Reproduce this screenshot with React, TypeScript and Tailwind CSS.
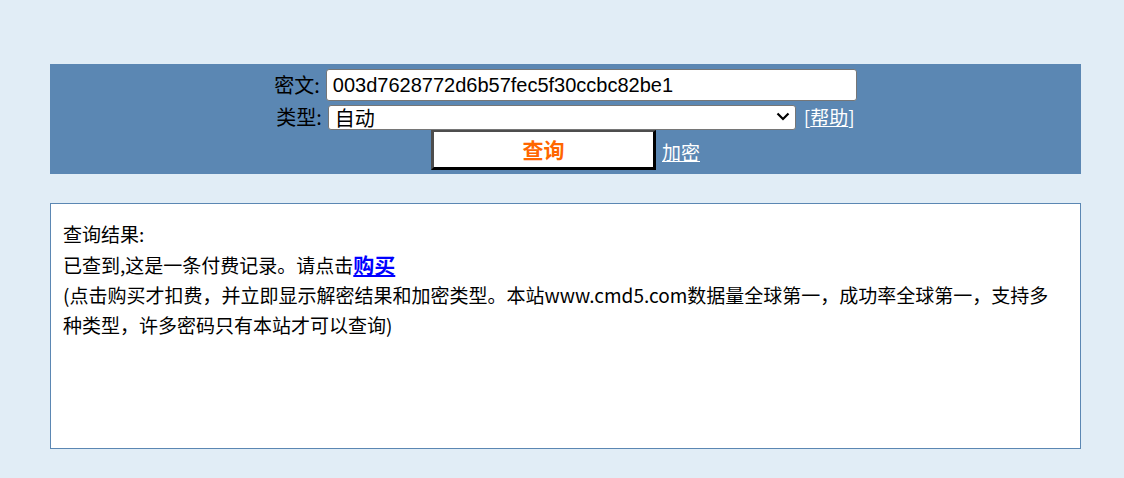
import React from "react";

export default function App() {
  const cjk = { fontFamily: '"Noto Sans CJK SC", "Noto Sans", sans-serif' };
  return (
    <div className="min-h-[478px] w-[1124px] bg-[#e1edf6] pt-[64px]" style={cjk}>
      <div className="mx-[50px] flex h-[110px] w-[1031px] flex-col items-center bg-[#5b87b3] pt-[5px] text-[19px] text-black">
        <div className="flex h-[32px] items-center">
          <span className="mr-[6px] text-[20px] leading-none">密文:</span>
          <input
            readOnly
            value="003d7628772d6b57fec5f30ccbc82be1"
            className="h-[32px] w-[531px] rounded-[3px] border border-[#767676] bg-white px-[6px] text-[20px] text-black outline-none"
            style={{ fontFamily: '"Liberation Sans", Arial, sans-serif' }}
          />
        </div>
        <div className="mt-[3px] flex h-[25px] items-center">
          <span className="mr-[6px] text-[20px] leading-none">类型:</span>
          <div className="relative h-[25px] w-[468px]">
            <select
              defaultValue="auto"
              className="h-[25px] w-[468px] appearance-none rounded-[3px] border border-[#767676] bg-white py-0 pl-[6px] text-[20px] leading-[23px] text-black outline-none"
              style={cjk}
            >
              <option value="auto">自动</option>
            </select>
            <svg
              className="pointer-events-none absolute right-[6px] top-[8px]"
              width="14"
              height="9"
              viewBox="0 0 14 9"
            >
              <path d="M1.5 1.5 L7 7 L12.5 1.5" fill="none" stroke="black" strokeWidth="2.2" />
            </svg>
          </div>
          <span className="ml-[8px] leading-none text-white">
            [<a href="#" className="underline">帮助</a>]
          </span>
        </div>
        <div className="mt-[1px] flex items-center">
          <button className="h-[40px] w-[225px] border-t-2 border-l-[3px] border-r-[3px] border-b-[3px] border-t-[#4d4d4d] border-l-[#4d4d4d] border-r-black border-b-black bg-white text-[21px] font-bold leading-none text-[#ff6600]">
            查询
          </button>
          <a href="#" className="ml-[6px] mt-[2px] leading-none text-white underline">
            加密
          </a>
        </div>
      </div>
      <div className="mx-[50px] mt-[29px] h-[246px] w-[1031px] border border-[#5b87b3] bg-white pl-[12px] pr-[30px] pt-[15px] text-[19px] leading-[30px] text-black">
        <div>查询结果:</div>
        <div>
          已查到,这是一条付费记录。请点击
          <a href="#" className="text-[21px] font-bold text-[#0000ff] underline">购买</a>
        </div>
        <div>
          (点击购买才扣费，并立即显示解密结果和加密类型。本站www.cmd5.com数据量全球第一，成功率全球第一，支持多种类型，许多密码只有本站才可以查询)
        </div>
      </div>
    </div>
  );
}
